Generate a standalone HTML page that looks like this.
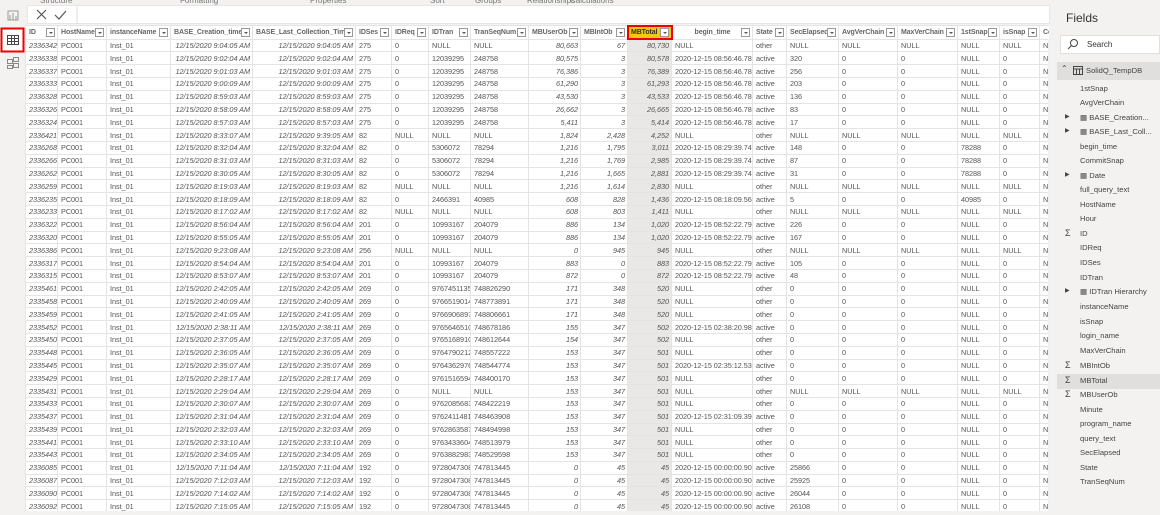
<!DOCTYPE html>
<html><head><meta charset="utf-8"><style>
*{margin:0;padding:0;box-sizing:border-box}
body{width:1160px;height:515px;overflow:hidden;background:#f3f2f1;font-family:"Liberation Sans",sans-serif;position:relative;color:#605e5c}
.rib{position:absolute;top:-4px;left:0;height:9px;width:1057px;font-size:8px;color:#777;background:#f3f2f1}
.rib span{position:absolute;top:0}
.nav{position:absolute;left:0;top:0;width:25px;height:515px;background:#f3f2f1}
.fbar{position:absolute;left:27px;top:5px;width:1023px;height:19px;background:#fff;border:1px solid #e6e6e6}
.grid{position:absolute;left:25px;top:25px;width:1024px;height:486px;overflow:hidden;background:#fff}
table{border-collapse:collapse;table-layout:fixed;width:1050px;font-size:7.3px;color:#555;letter-spacing:-0.05px}
td,th{border:1px solid #e4e4e4;height:12.8px;padding:0 2px 0 3px;white-space:nowrap;overflow:hidden;line-height:11px}
th{height:13.6px;font-weight:bold;color:#666;text-align:left;position:relative;font-size:7px;letter-spacing:-0.1px}
th i{position:absolute;right:2px;top:2px;width:9px;height:9px;border:1px solid #999;background:#fff}
th i:after{content:"";position:absolute;left:2px;top:3px;border:2px solid transparent;border-top:2.5px solid #555}
td:nth-child(1){font-style:italic}
td:nth-child(4),td:nth-child(5),td:nth-child(10),td:nth-child(11),td:nth-child(12){font-style:italic;text-align:right}
td:nth-child(12){background:#e9e8e7}
.fields{position:absolute;left:1057px;top:0;width:103px;height:515px;background:#f3f2f1}
.fi{position:absolute;left:23px;font-size:7.6px;color:#444;white-space:nowrap}
.ic{position:absolute;left:8px;font-size:9px;color:#444}
</style></head><body>
<div class="rib"><span style="left:40px">Structure</span><span style="left:180px">Formatting</span><span style="left:310px">Properties</span><span style="left:430px">Sort</span><span style="left:475px">Groups</span><span style="left:527px">Relationships</span><span style="left:570px">Calculations</span></div>
<div class="nav">
<svg width="25" height="80" style="position:absolute;left:0;top:0">
<g fill="none" stroke="#999" stroke-width="1"><rect x="8" y="11" width="10" height="9"/><path d="M10 20v-5M13 20v-7M16 20v-4"/></g>
<rect x="1.5" y="28.5" width="22" height="23" fill="#fff" stroke="#e00" stroke-width="2"/>
<g fill="none" stroke="#444" stroke-width="1"><rect x="7.5" y="35.5" width="11" height="9"/><path d="M7.5 38.5h11M7.5 41.5h11M11.5 35.5v9M14.5 35.5v9"/></g>
<g fill="none" stroke="#888" stroke-width="1"><rect x="7.5" y="59.5" width="5" height="4"/><rect x="13.5" y="57.5" width="5" height="4"/><rect x="13.5" y="63.5" width="5" height="4"/><rect x="7.5" y="65.5" width="5" height="3"/></g>
</svg></div>
<div class="fbar"><svg width="60" height="18" style="position:absolute;left:5px;top:0"><path d="M4 4l9 9M13 4l-9 9" stroke="#555" stroke-width="1.2"/><path d="M22 9l4 4 7-8" stroke="#555" stroke-width="1.2" fill="none"/><path d="M44 0v18" stroke="#ddd"/></svg></div>
<div class="grid"><table>
<colgroup><col style="width:32px"><col style="width:49px"><col style="width:64px"><col style="width:82px"><col style="width:103px"><col style="width:36px"><col style="width:37px"><col style="width:42px"><col style="width:58px"><col style="width:52px"><col style="width:47px"><col style="width:44px"><col style="width:81px"><col style="width:34px"><col style="width:52px"><col style="width:59px"><col style="width:60px"><col style="width:42px"><col style="width:40px"><col style="width:40px"></colgroup>
<tr><th>ID<i></i></th><th>HostName<i></i></th><th>instanceName<i></i></th><th>BASE_Creation_time<i></i></th><th>BASE_Last_Collection_Time<i></i></th><th>IDSes<i></i></th><th>IDReq<i></i></th><th>IDTran<i></i></th><th>TranSeqNum<i></i></th><th>MBUserOb<i></i></th><th>MBIntOb<i></i></th><th style="background:#f2c811;color:#333;outline:2px solid #e00;outline-offset:-1px">MBTotal<i></i></th><th style="text-align:center">begin_time<i></i></th><th>State<i></i></th><th>SecElapsed<i></i></th><th>AvgVerChain<i></i></th><th>MaxVerChain<i></i></th><th>1stSnap<i></i></th><th>isSnap<i></i></th><th>Comm</th></tr>
<tr><td>2336342</td><td>PC001</td><td>Inst_01</td><td>12/15/2020 9:04:05 AM</td><td>12/15/2020 9:04:05 AM</td><td>275</td><td>0</td><td>NULL</td><td>NULL</td><td>80,663</td><td>67</td><td>80,730</td><td>NULL</td><td>other</td><td>NULL</td><td>NULL</td><td>NULL</td><td>NULL</td><td>NULL</td><td>NULL</td></tr>
<tr><td>2336338</td><td>PC001</td><td>Inst_01</td><td>12/15/2020 9:02:04 AM</td><td>12/15/2020 9:02:04 AM</td><td>275</td><td>0</td><td>12039295</td><td>248758</td><td>80,575</td><td>3</td><td>80,578</td><td>2020-12-15 08:56:46.783</td><td>active</td><td>320</td><td>0</td><td>0</td><td>NULL</td><td>0</td><td>NULL</td></tr>
<tr><td>2336337</td><td>PC001</td><td>Inst_01</td><td>12/15/2020 9:01:03 AM</td><td>12/15/2020 9:01:03 AM</td><td>275</td><td>0</td><td>12039295</td><td>248758</td><td>76,386</td><td>3</td><td>76,389</td><td>2020-12-15 08:56:46.783</td><td>active</td><td>256</td><td>0</td><td>0</td><td>NULL</td><td>0</td><td>NULL</td></tr>
<tr><td>2336333</td><td>PC001</td><td>Inst_01</td><td>12/15/2020 9:00:09 AM</td><td>12/15/2020 9:00:09 AM</td><td>275</td><td>0</td><td>12039295</td><td>248758</td><td>61,290</td><td>3</td><td>61,293</td><td>2020-12-15 08:56:46.783</td><td>active</td><td>203</td><td>0</td><td>0</td><td>NULL</td><td>0</td><td>NULL</td></tr>
<tr><td>2336328</td><td>PC001</td><td>Inst_01</td><td>12/15/2020 8:59:03 AM</td><td>12/15/2020 8:59:03 AM</td><td>275</td><td>0</td><td>12039295</td><td>248758</td><td>43,530</td><td>3</td><td>43,533</td><td>2020-12-15 08:56:46.783</td><td>active</td><td>136</td><td>0</td><td>0</td><td>NULL</td><td>0</td><td>NULL</td></tr>
<tr><td>2336326</td><td>PC001</td><td>Inst_01</td><td>12/15/2020 8:58:09 AM</td><td>12/15/2020 8:58:09 AM</td><td>275</td><td>0</td><td>12039295</td><td>248758</td><td>26,662</td><td>3</td><td>26,665</td><td>2020-12-15 08:56:46.783</td><td>active</td><td>83</td><td>0</td><td>0</td><td>NULL</td><td>0</td><td>NULL</td></tr>
<tr><td>2336324</td><td>PC001</td><td>Inst_01</td><td>12/15/2020 8:57:03 AM</td><td>12/15/2020 8:57:03 AM</td><td>275</td><td>0</td><td>12039295</td><td>248758</td><td>5,411</td><td>3</td><td>5,414</td><td>2020-12-15 08:56:46.783</td><td>active</td><td>17</td><td>0</td><td>0</td><td>NULL</td><td>0</td><td>NULL</td></tr>
<tr><td>2336421</td><td>PC001</td><td>Inst_01</td><td>12/15/2020 8:33:07 AM</td><td>12/15/2020 9:39:05 AM</td><td>82</td><td>NULL</td><td>NULL</td><td>NULL</td><td>1,824</td><td>2,428</td><td>4,252</td><td>NULL</td><td>other</td><td>NULL</td><td>NULL</td><td>NULL</td><td>NULL</td><td>NULL</td><td>NULL</td></tr>
<tr><td>2336268</td><td>PC001</td><td>Inst_01</td><td>12/15/2020 8:32:04 AM</td><td>12/15/2020 8:32:04 AM</td><td>82</td><td>0</td><td>5306072</td><td>78294</td><td>1,216</td><td>1,795</td><td>3,011</td><td>2020-12-15 08:29:39.740</td><td>active</td><td>148</td><td>0</td><td>0</td><td>78288</td><td>0</td><td>NULL</td></tr>
<tr><td>2336266</td><td>PC001</td><td>Inst_01</td><td>12/15/2020 8:31:03 AM</td><td>12/15/2020 8:31:03 AM</td><td>82</td><td>0</td><td>5306072</td><td>78294</td><td>1,216</td><td>1,769</td><td>2,985</td><td>2020-12-15 08:29:39.740</td><td>active</td><td>87</td><td>0</td><td>0</td><td>78288</td><td>0</td><td>NULL</td></tr>
<tr><td>2336262</td><td>PC001</td><td>Inst_01</td><td>12/15/2020 8:30:05 AM</td><td>12/15/2020 8:30:05 AM</td><td>82</td><td>0</td><td>5306072</td><td>78294</td><td>1,216</td><td>1,665</td><td>2,881</td><td>2020-12-15 08:29:39.740</td><td>active</td><td>31</td><td>0</td><td>0</td><td>78288</td><td>0</td><td>NULL</td></tr>
<tr><td>2336259</td><td>PC001</td><td>Inst_01</td><td>12/15/2020 8:19:03 AM</td><td>12/15/2020 8:19:03 AM</td><td>82</td><td>NULL</td><td>NULL</td><td>NULL</td><td>1,216</td><td>1,614</td><td>2,830</td><td>NULL</td><td>other</td><td>NULL</td><td>NULL</td><td>NULL</td><td>NULL</td><td>NULL</td><td>NULL</td></tr>
<tr><td>2336235</td><td>PC001</td><td>Inst_01</td><td>12/15/2020 8:18:09 AM</td><td>12/15/2020 8:18:09 AM</td><td>82</td><td>0</td><td>2466391</td><td>40985</td><td>608</td><td>828</td><td>1,436</td><td>2020-12-15 08:18:09.567</td><td>active</td><td>5</td><td>0</td><td>0</td><td>40985</td><td>0</td><td>NULL</td></tr>
<tr><td>2336233</td><td>PC001</td><td>Inst_01</td><td>12/15/2020 8:17:02 AM</td><td>12/15/2020 8:17:02 AM</td><td>82</td><td>NULL</td><td>NULL</td><td>NULL</td><td>608</td><td>803</td><td>1,411</td><td>NULL</td><td>other</td><td>NULL</td><td>NULL</td><td>NULL</td><td>NULL</td><td>NULL</td><td>NULL</td></tr>
<tr><td>2336322</td><td>PC001</td><td>Inst_01</td><td>12/15/2020 8:56:04 AM</td><td>12/15/2020 8:56:04 AM</td><td>201</td><td>0</td><td>10993167</td><td>204079</td><td>886</td><td>134</td><td>1,020</td><td>2020-12-15 08:52:22.793</td><td>active</td><td>226</td><td>0</td><td>0</td><td>NULL</td><td>0</td><td>NULL</td></tr>
<tr><td>2336320</td><td>PC001</td><td>Inst_01</td><td>12/15/2020 8:55:05 AM</td><td>12/15/2020 8:55:05 AM</td><td>201</td><td>0</td><td>10993167</td><td>204079</td><td>886</td><td>134</td><td>1,020</td><td>2020-12-15 08:52:22.793</td><td>active</td><td>167</td><td>0</td><td>0</td><td>NULL</td><td>0</td><td>NULL</td></tr>
<tr><td>2336386</td><td>PC001</td><td>Inst_01</td><td>12/15/2020 9:23:08 AM</td><td>12/15/2020 9:23:08 AM</td><td>256</td><td>NULL</td><td>NULL</td><td>NULL</td><td>0</td><td>945</td><td>945</td><td>NULL</td><td>other</td><td>NULL</td><td>NULL</td><td>NULL</td><td>NULL</td><td>NULL</td><td>NULL</td></tr>
<tr><td>2336317</td><td>PC001</td><td>Inst_01</td><td>12/15/2020 8:54:04 AM</td><td>12/15/2020 8:54:04 AM</td><td>201</td><td>0</td><td>10993167</td><td>204079</td><td>883</td><td>0</td><td>883</td><td>2020-12-15 08:52:22.793</td><td>active</td><td>105</td><td>0</td><td>0</td><td>NULL</td><td>0</td><td>NULL</td></tr>
<tr><td>2336315</td><td>PC001</td><td>Inst_01</td><td>12/15/2020 8:53:07 AM</td><td>12/15/2020 8:53:07 AM</td><td>201</td><td>0</td><td>10993167</td><td>204079</td><td>872</td><td>0</td><td>872</td><td>2020-12-15 08:52:22.793</td><td>active</td><td>48</td><td>0</td><td>0</td><td>NULL</td><td>0</td><td>NULL</td></tr>
<tr><td>2335461</td><td>PC001</td><td>Inst_01</td><td>12/15/2020 2:42:05 AM</td><td>12/15/2020 2:42:05 AM</td><td>269</td><td>0</td><td>9767451135</td><td>748826290</td><td>171</td><td>348</td><td>520</td><td>NULL</td><td>other</td><td>0</td><td>0</td><td>0</td><td>NULL</td><td>0</td><td>NULL</td></tr>
<tr><td>2335458</td><td>PC001</td><td>Inst_01</td><td>12/15/2020 2:40:09 AM</td><td>12/15/2020 2:40:09 AM</td><td>269</td><td>0</td><td>9766519014</td><td>748773891</td><td>171</td><td>348</td><td>520</td><td>NULL</td><td>other</td><td>0</td><td>0</td><td>0</td><td>NULL</td><td>0</td><td>NULL</td></tr>
<tr><td>2335459</td><td>PC001</td><td>Inst_01</td><td>12/15/2020 2:41:05 AM</td><td>12/15/2020 2:41:05 AM</td><td>269</td><td>0</td><td>9766906897</td><td>748806661</td><td>171</td><td>348</td><td>520</td><td>NULL</td><td>other</td><td>0</td><td>0</td><td>0</td><td>NULL</td><td>0</td><td>NULL</td></tr>
<tr><td>2335452</td><td>PC001</td><td>Inst_01</td><td>12/15/2020 2:38:11 AM</td><td>12/15/2020 2:38:11 AM</td><td>269</td><td>0</td><td>9765646510</td><td>748678186</td><td>155</td><td>347</td><td>502</td><td>2020-12-15 02:38:20.987</td><td>active</td><td>0</td><td>0</td><td>0</td><td>NULL</td><td>0</td><td>NULL</td></tr>
<tr><td>2335450</td><td>PC001</td><td>Inst_01</td><td>12/15/2020 2:37:05 AM</td><td>12/15/2020 2:37:05 AM</td><td>269</td><td>0</td><td>9765168910</td><td>748612644</td><td>154</td><td>347</td><td>502</td><td>NULL</td><td>other</td><td>0</td><td>0</td><td>0</td><td>NULL</td><td>0</td><td>NULL</td></tr>
<tr><td>2335448</td><td>PC001</td><td>Inst_01</td><td>12/15/2020 2:36:05 AM</td><td>12/15/2020 2:36:05 AM</td><td>269</td><td>0</td><td>9764790212</td><td>748557222</td><td>153</td><td>347</td><td>501</td><td>NULL</td><td>other</td><td>0</td><td>0</td><td>0</td><td>NULL</td><td>0</td><td>NULL</td></tr>
<tr><td>2335445</td><td>PC001</td><td>Inst_01</td><td>12/15/2020 2:35:07 AM</td><td>12/15/2020 2:35:07 AM</td><td>269</td><td>0</td><td>9764362976</td><td>748544774</td><td>153</td><td>347</td><td>501</td><td>2020-12-15 02:35:12.530</td><td>active</td><td>0</td><td>0</td><td>0</td><td>NULL</td><td>0</td><td>NULL</td></tr>
<tr><td>2335429</td><td>PC001</td><td>Inst_01</td><td>12/15/2020 2:28:17 AM</td><td>12/15/2020 2:28:17 AM</td><td>269</td><td>0</td><td>9761516594</td><td>748400170</td><td>153</td><td>347</td><td>501</td><td>NULL</td><td>other</td><td>0</td><td>0</td><td>0</td><td>NULL</td><td>0</td><td>NULL</td></tr>
<tr><td>2335431</td><td>PC001</td><td>Inst_01</td><td>12/15/2020 2:29:04 AM</td><td>12/15/2020 2:29:04 AM</td><td>269</td><td>0</td><td>NULL</td><td>NULL</td><td>153</td><td>347</td><td>501</td><td>NULL</td><td>other</td><td>NULL</td><td>NULL</td><td>NULL</td><td>NULL</td><td>NULL</td><td>NULL</td></tr>
<tr><td>2335433</td><td>PC001</td><td>Inst_01</td><td>12/15/2020 2:30:07 AM</td><td>12/15/2020 2:30:07 AM</td><td>269</td><td>0</td><td>9762085683</td><td>748422219</td><td>153</td><td>347</td><td>501</td><td>NULL</td><td>other</td><td>0</td><td>0</td><td>0</td><td>NULL</td><td>0</td><td>NULL</td></tr>
<tr><td>2335437</td><td>PC001</td><td>Inst_01</td><td>12/15/2020 2:31:04 AM</td><td>12/15/2020 2:31:04 AM</td><td>269</td><td>0</td><td>9762411481</td><td>748463908</td><td>153</td><td>347</td><td>501</td><td>2020-12-15 02:31:09.393</td><td>active</td><td>0</td><td>0</td><td>0</td><td>NULL</td><td>0</td><td>NULL</td></tr>
<tr><td>2335439</td><td>PC001</td><td>Inst_01</td><td>12/15/2020 2:32:03 AM</td><td>12/15/2020 2:32:03 AM</td><td>269</td><td>0</td><td>9762863587</td><td>748494998</td><td>153</td><td>347</td><td>501</td><td>NULL</td><td>other</td><td>0</td><td>0</td><td>0</td><td>NULL</td><td>0</td><td>NULL</td></tr>
<tr><td>2335441</td><td>PC001</td><td>Inst_01</td><td>12/15/2020 2:33:10 AM</td><td>12/15/2020 2:33:10 AM</td><td>269</td><td>0</td><td>9763433604</td><td>748513979</td><td>153</td><td>347</td><td>501</td><td>NULL</td><td>other</td><td>0</td><td>0</td><td>0</td><td>NULL</td><td>0</td><td>NULL</td></tr>
<tr><td>2335443</td><td>PC001</td><td>Inst_01</td><td>12/15/2020 2:34:05 AM</td><td>12/15/2020 2:34:05 AM</td><td>269</td><td>0</td><td>9763882983</td><td>748529598</td><td>153</td><td>347</td><td>501</td><td>NULL</td><td>other</td><td>0</td><td>0</td><td>0</td><td>NULL</td><td>0</td><td>NULL</td></tr>
<tr><td>2336085</td><td>PC001</td><td>Inst_01</td><td>12/15/2020 7:11:04 AM</td><td>12/15/2020 7:11:04 AM</td><td>192</td><td>0</td><td>9728047308</td><td>747813445</td><td>0</td><td>45</td><td>45</td><td>2020-12-15 00:00:00.903</td><td>active</td><td>25866</td><td>0</td><td>0</td><td>NULL</td><td>0</td><td>NULL</td></tr>
<tr><td>2336087</td><td>PC001</td><td>Inst_01</td><td>12/15/2020 7:12:03 AM</td><td>12/15/2020 7:12:03 AM</td><td>192</td><td>0</td><td>9728047308</td><td>747813445</td><td>0</td><td>45</td><td>45</td><td>2020-12-15 00:00:00.903</td><td>active</td><td>25925</td><td>0</td><td>0</td><td>NULL</td><td>0</td><td>NULL</td></tr>
<tr><td>2336090</td><td>PC001</td><td>Inst_01</td><td>12/15/2020 7:14:02 AM</td><td>12/15/2020 7:14:02 AM</td><td>192</td><td>0</td><td>9728047308</td><td>747813445</td><td>0</td><td>45</td><td>45</td><td>2020-12-15 00:00:00.903</td><td>active</td><td>26044</td><td>0</td><td>0</td><td>NULL</td><td>0</td><td>NULL</td></tr>
<tr><td>2336092</td><td>PC001</td><td>Inst_01</td><td>12/15/2020 7:15:05 AM</td><td>12/15/2020 7:15:05 AM</td><td>192</td><td>0</td><td>9728047308</td><td>747813445</td><td>0</td><td>45</td><td>45</td><td>2020-12-15 00:00:00.903</td><td>active</td><td>26108</td><td>0</td><td>0</td><td>NULL</td><td>0</td><td>NULL</td></tr>
</table>
<div style="position:absolute;left:1023px;top:14px;width:9px;height:472px;background:#f0f0f0"></div>
<div style="position:absolute;left:1024px;top:23px;width:7px;height:44px;background:#c8c8c8"></div>
<div style="position:absolute;left:1024px;top:14px;font-size:7px;color:#333">&#708;</div>
<div style="position:absolute;left:1024px;top:476px;font-size:7px;color:#333">&#709;</div>
</div>
<div class="fields">
<div style="position:absolute;left:9px;top:11px;font-size:12px;color:#333">Fields</div>
<div style="position:absolute;left:3px;top:35px;width:100px;height:19px;background:#fff;border:1px solid #e1dfdd;font-size:8px;color:#333;padding:4px 0 0 26px">Search</div>
<svg style="position:absolute;left:10px;top:38px" width="12" height="12"><circle cx="7" cy="5" r="3.5" fill="none" stroke="#444"/><path d="M4.5 7.5L1 11" stroke="#444"/></svg>
<div style="position:absolute;left:0;top:62px;width:103px;height:18px;background:#e1dfdd"></div>
<div style="position:absolute;left:4px;top:64px;font-size:8px;color:#444">&#8963;</div>
<svg style="position:absolute;left:16px;top:66px" width="10" height="9"><rect x=".5" y=".5" width="9" height="8" fill="none" stroke="#444"/><path d="M.5 3h9M3.5 3v6M6.5 3v6" stroke="#444"/></svg>
<div class="fi" style="left:29px;top:66px">SolidQ_TempDB</div>
<div style="position:absolute;left:0;top:374px;width:103px;height:15px;background:#e1dfdd"></div>
<div class="fi" style="top:84px">1stSnap</div>
<div class="fi" style="top:98px">AvgVerChain</div>
<div class="ic" style="top:113px;font-size:6px">&#9654;</div><div class="fi" style="left:23px;top:113px">&#9638; BASE_Creation...</div>
<div class="ic" style="top:127px;font-size:6px">&#9654;</div><div class="fi" style="left:23px;top:127px">&#9638; BASE_Last_Coll...</div>
<div class="fi" style="top:142px">begin_time</div>
<div class="fi" style="top:156px">CommitSnap</div>
<div class="ic" style="top:171px;font-size:6px">&#9654;</div><div class="fi" style="left:23px;top:171px">&#9638; Date</div>
<div class="fi" style="top:185px">full_query_text</div>
<div class="fi" style="top:200px">HostName</div>
<div class="fi" style="top:214px">Hour</div>
<div class="ic" style="top:228px">&Sigma;</div><div class="fi" style="top:229px">ID</div>
<div class="fi" style="top:243px">IDReq</div>
<div class="fi" style="top:258px">IDSes</div>
<div class="fi" style="top:273px">IDTran</div>
<div class="ic" style="top:287px;font-size:6px">&#9654;</div><div class="fi" style="left:23px;top:287px">&#9638; IDTran Hierarchy</div>
<div class="fi" style="top:302px">instanceName</div>
<div class="fi" style="top:317px">isSnap</div>
<div class="fi" style="top:331px">login_name</div>
<div class="fi" style="top:346px">MaxVerChain</div>
<div class="ic" style="top:360px">&Sigma;</div><div class="fi" style="top:361px">MBIntOb</div>
<div class="ic" style="top:375px">&Sigma;</div><div class="fi" style="top:376px">MBTotal</div>
<div class="ic" style="top:389px">&Sigma;</div><div class="fi" style="top:390px">MBUserOb</div>
<div class="fi" style="top:405px">Minute</div>
<div class="fi" style="top:419px">program_name</div>
<div class="fi" style="top:434px">query_text</div>
<div class="fi" style="top:448px">SecElapsed</div>
<div class="fi" style="top:463px">State</div>
<div class="fi" style="top:477px">TranSeqNum</div>
</div>
</body></html>
